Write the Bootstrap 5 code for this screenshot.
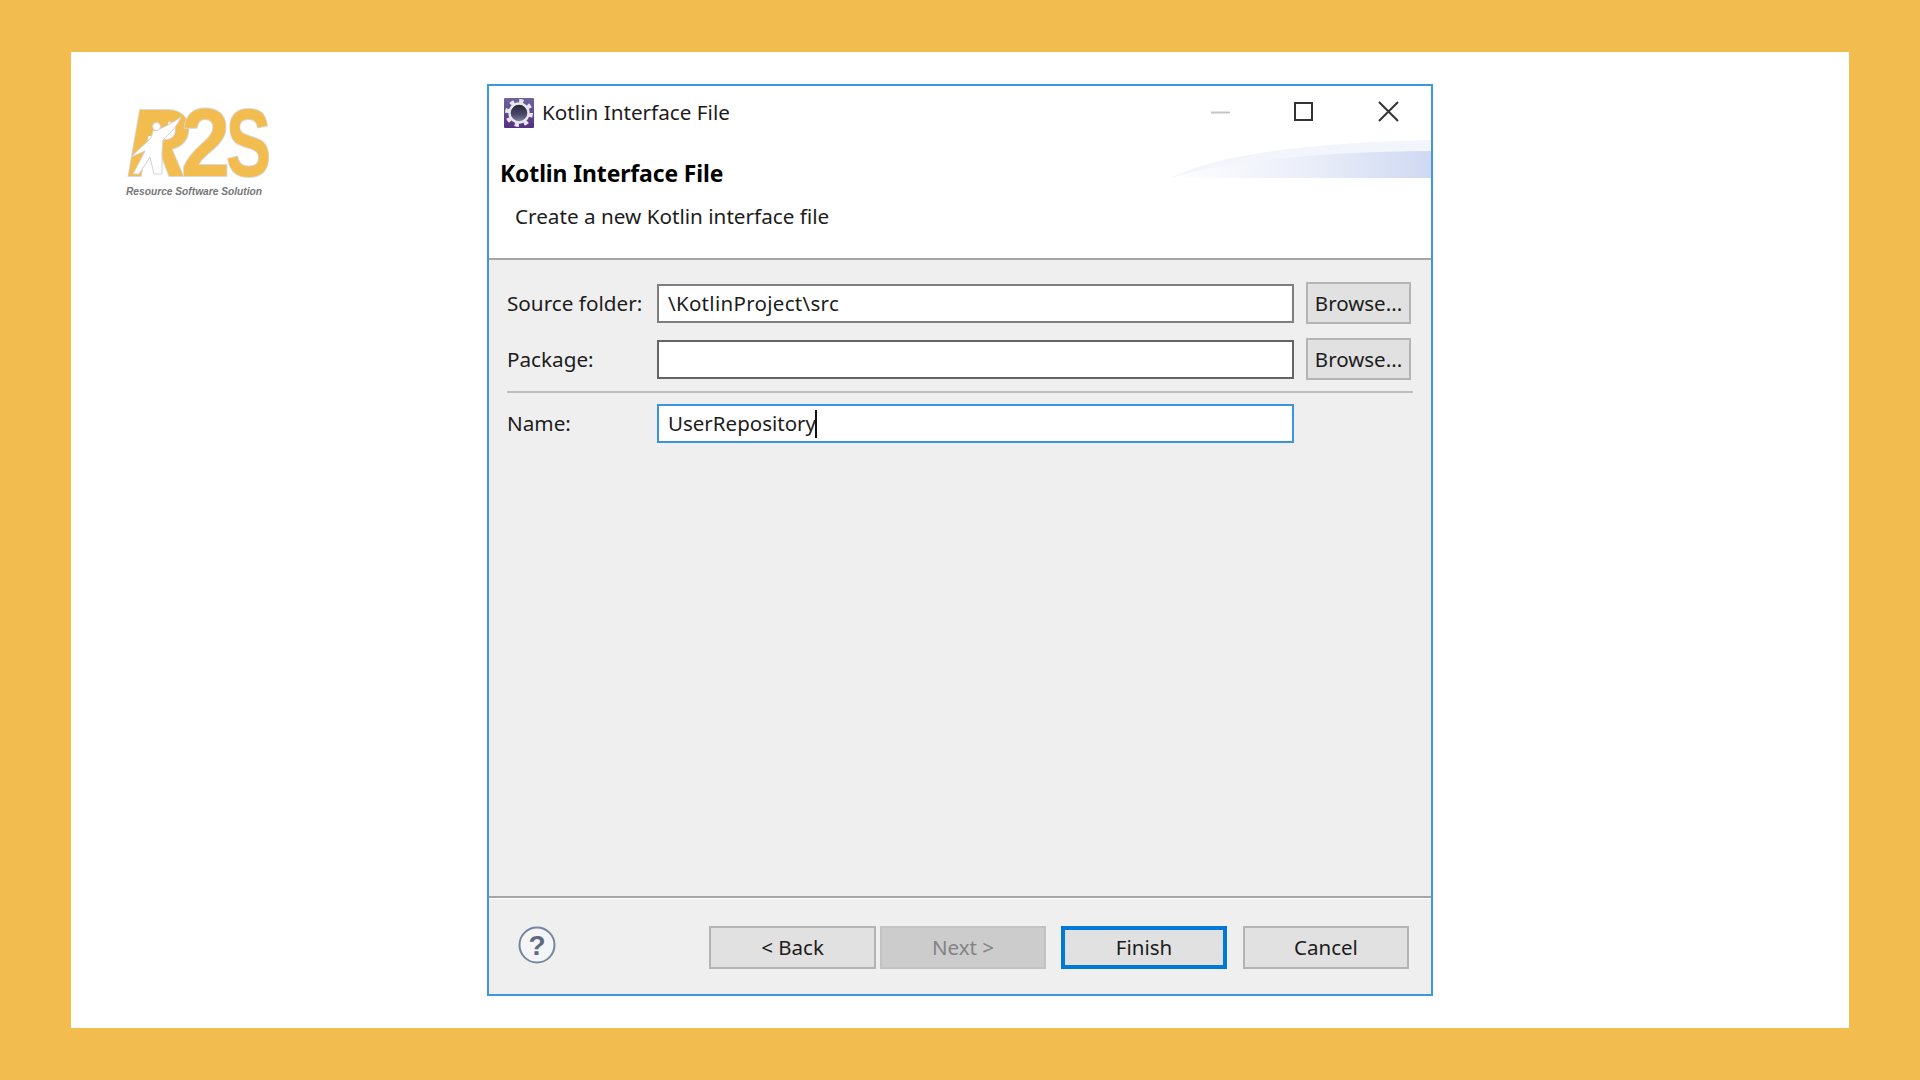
<!DOCTYPE html>
<html lang="en">
<head>
<meta charset="utf-8">
<title>Kotlin Interface File</title>
<link rel="stylesheet" href="https://cdn.jsdelivr.net/npm/bootstrap@5.3.0/dist/css/bootstrap.min.css">
<style>
html,body{height:100%;}
body{background:#f3bc4f;font-family:"Noto Sans","Open Sans","Liberation Sans",sans-serif;color:#1c1c1c;overflow:hidden;}
.sheet{position:absolute;left:71px;top:52px;width:1778px;height:976px;background:#fff;padding:32px 0 0 54px;}
.logo-col{width:362px;flex:none;}
.logo-col svg{display:block;}
.dlg{width:946px;height:912px;border:2px solid #3f96e0;position:relative;flex:none;}
.dlg-head{height:174px;border-bottom:2px solid #a5a5a5;background:#fff;position:relative;}
.title-row{height:53px;padding-left:15px;gap:8px;font-size:20.7px;}
.win-btns{position:absolute;right:0;top:0;}
.swoosh{position:absolute;right:0;top:54px;}
.head-main{font-size:22.9px;font-weight:700;line-height:30px;padding-left:11px;margin-top:20px;color:#000;letter-spacing:-.1px;}
.head-sub{font-size:20.7px;line-height:30px;padding-left:26px;margin-top:12px;}
.dlg-body{background:#efefef;padding:22px 18px 0 18px;}
.frm-row{height:42px;gap:12px;margin-bottom:14px;}
.frm-lbl{width:138px;flex:none;font-size:20.7px;white-space:nowrap;padding-top:2px;}
.fld.form-control{width:637px;height:39px;flex:none;border:2px solid #7f7f7f;border-radius:0;padding:0 9px;font-size:20.5px;line-height:35px;color:#1c1c1c;background:#fff;box-shadow:none;}
.fld.fld-path{letter-spacing:.3px;}
.fld.fld-dark{border-color:#646464;}
.fld.fld-on{border-color:#3b94e0;}
.caret-mark{display:inline-block;width:2px;height:28px;background:#111;vertical-align:middle;margin:-2px 0 0 -1px;}
.wbtn.btn{border:2px solid #b4b4b4;border-radius:0;background:#e1e1e1;color:#1c1c1c;font-size:20.5px;padding:0;line-height:1;}
.brw.btn{width:105px;height:42px;flex:none;}
.sep-line{width:906px;height:2px;background:#bdbdbd;margin:-3px 0 9px 0;}
.dlg-foot{height:98px;background:#efefef;border-top:2px solid #a5a5a5;box-shadow:inset 0 1px 0 #fff;padding:28px 22px 0 29px;}
.foot-btn.btn{height:43px;width:167px;}
.wbtn.btn.is-off,.wbtn.btn:disabled{width:166px;background:#ccc;border-color:#c2c2c2;color:#838383;opacity:1;margin-left:4px;}
.wbtn.btn.is-def{width:166px;border:4px solid #0078d7;margin-left:15px;}
.wbtn.btn.is-last{width:166px;margin-left:16px;}
</style>
</head>
<body>
<div class="sheet d-flex">
  <div class="logo-col">
    <svg width="170" height="150" viewBox="0 0 170 150" xmlns="http://www.w3.org/2000/svg" role="img" aria-label="R2S Resource Software Solution">
      <g font-family="Liberation Sans, sans-serif" font-weight="700" fill="#f3bc4f" stroke="#d9d9d9" stroke-width="2" style="paint-order:stroke">
        <text x="2" y="92" font-size="96" font-style="italic" textLength="62" lengthAdjust="spacingAndGlyphs">R</text>
        <text x="56" y="92" font-size="96" textLength="49" lengthAdjust="spacingAndGlyphs">2</text>
        <text x="101" y="92" font-size="96" textLength="45" lengthAdjust="spacingAndGlyphs">S</text>
      </g>
      <path d="M20 32 L44 32 L42 52 L22 52 Z" fill="#f3bc4f"/>
      <path d="M6 73 L26 54 L28 47 C34 46 46 40 56 33 C52 43 44 50 38 56 L37 68 L37 90 L29 90 L25 73 L14 90 L8 90 L20 67 Z" fill="#fff" stroke="#d2d2d2" stroke-width="1"/>
      <circle cx="31.5" cy="42.5" r="4" fill="#fff" stroke="#d2d2d2"/>
      <text x="1" y="111" font-family="Liberation Sans, sans-serif" font-size="11.6" font-style="italic" font-weight="700" fill="#75777a" textLength="136" lengthAdjust="spacingAndGlyphs">Resource Software Solution</text>
    </svg>
  </div>
  <div class="dlg d-flex flex-column">
    <div class="dlg-head">
      <svg class="swoosh" width="260" height="38" viewBox="0 0 260 38" xmlns="http://www.w3.org/2000/svg" aria-hidden="true">
        <defs><linearGradient id="sw" x1="0" x2="1" y1="0" y2="0"><stop offset="0" stop-color="#fff"/><stop offset=".55" stop-color="#e9edf9"/><stop offset="1" stop-color="#cfd9f2"/></linearGradient></defs>
        <path d="M0 38 C40 16 130 3 260 0 V38 Z" fill="#f3f5fc"/>
        <path d="M0 38 C50 22 140 12 260 11 V38 Z" fill="url(#sw)"/>
      </svg>
      <svg class="win-btns" width="240" height="54" viewBox="0 0 240 54" xmlns="http://www.w3.org/2000/svg" aria-hidden="true">
        <line x1="20" y1="26.5" x2="39" y2="26.5" stroke="#c4c4c4" stroke-width="2"/>
        <rect x="104" y="17" width="17" height="17" fill="none" stroke="#333" stroke-width="2"/>
        <path d="M188 16 L207 35 M207 16 L188 35" stroke="#333" stroke-width="2" fill="none"/>
      </svg>
      <div class="title-row d-flex align-items-center">
        <svg width="30" height="30" viewBox="0 0 30 30" xmlns="http://www.w3.org/2000/svg" aria-hidden="true">
          <defs><linearGradient id="pu" x1="0" x2="0" y1="0" y2="1"><stop offset="0" stop-color="#6e659c"/><stop offset="1" stop-color="#54307f"/></linearGradient>
          <linearGradient id="hub" x1="0" x2="0" y1="0" y2="1"><stop offset="0" stop-color="#23222f"/><stop offset=".6" stop-color="#4c4a6e"/><stop offset="1" stop-color="#8d8aa6"/></linearGradient></defs>
          <rect width="30" height="30" rx="1" fill="url(#pu)"/>
          <circle cx="15" cy="15" r="12" fill="none" stroke="#e8e8ec" stroke-width="4" stroke-dasharray="4.2 5.2"/>
          <circle cx="15" cy="15" r="9.5" fill="url(#hub)" stroke="#e8e8ec" stroke-width="2.4"/>
        </svg>
        <span>Kotlin Interface File</span>
      </div>
      <div class="head-main">Kotlin Interface File</div>
      <div class="head-sub">Create a new Kotlin interface file</div>
    </div>
    <div class="dlg-body flex-grow-1">
      <div class="frm-row d-flex align-items-center">
        <label class="frm-lbl">Source folder:</label>
        <input class="fld fld-path form-control" type="text" value="\KotlinProject\src">
        <button class="wbtn brw btn" type="button">Browse...</button>
      </div>
      <div class="frm-row d-flex align-items-center">
        <label class="frm-lbl">Package:</label>
        <input class="fld fld-dark form-control" type="text" value="">
        <button class="wbtn brw btn" type="button">Browse...</button>
      </div>
      <div class="sep-line"></div>
      <div class="frm-row d-flex align-items-center">
        <label class="frm-lbl">Name:</label>
        <div class="fld fld-on form-control">UserRepository<span class="caret-mark"></span></div>
      </div>
    </div>
    <div class="dlg-foot d-flex align-items-start">
      <svg width="38" height="38" viewBox="0 0 38 38" xmlns="http://www.w3.org/2000/svg" role="img" aria-label="Help">
        <circle cx="19" cy="19" r="17.5" fill="#f4f5f7" stroke="#76869e" stroke-width="2"/>
        <text x="19" y="29" text-anchor="middle" font-family="Liberation Sans, sans-serif" font-weight="700" font-size="28" fill="#5c6a82">?</text>
      </svg>
      <div class="d-flex ms-auto">
        <button class="wbtn foot-btn btn" type="button">&lt; Back</button>
        <button class="wbtn foot-btn btn is-off" type="button" disabled>Next &gt;</button>
        <button class="wbtn foot-btn btn is-def" type="button">Finish</button>
        <button class="wbtn foot-btn btn is-last" type="button">Cancel</button>
      </div>
    </div>
  </div>
</div>
<script src="https://cdn.jsdelivr.net/npm/bootstrap@5.3.0/dist/js/bootstrap.bundle.min.js"></script>
</body>
</html>
